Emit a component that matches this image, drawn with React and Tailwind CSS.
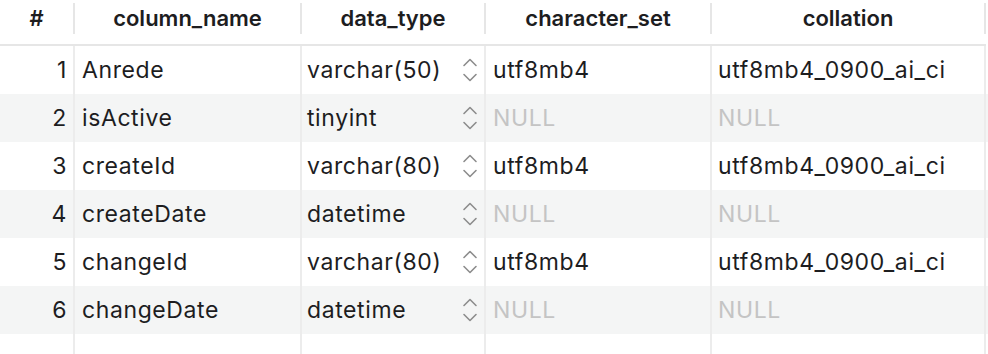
import React from "react";

const rows = [
  { n: 1, name: "Anrede", type: "varchar(50)", cs: "utf8mb4", col: "utf8mb4_0900_ai_ci" },
  { n: 2, name: "isActive", type: "tinyint", cs: null, col: null },
  { n: 3, name: "createId", type: "varchar(80)", cs: "utf8mb4", col: "utf8mb4_0900_ai_ci" },
  { n: 4, name: "createDate", type: "datetime", cs: null, col: null },
  { n: 5, name: "changeId", type: "varchar(80)", cs: "utf8mb4", col: "utf8mb4_0900_ai_ci" },
  { n: 6, name: "changeDate", type: "datetime", cs: null, col: null },
];

const grid = "grid grid-cols-[73px_227px_184px_226px_276px]";

function Chevrons() {
  return (
    <svg width="16" height="26" viewBox="0 0 16 26" fill="none" stroke="#8d8d8d" strokeWidth="1.6" strokeLinecap="round" strokeLinejoin="round">
      <path d="M2 8.5 L8 2.5 L14 8.5" />
      <path d="M2 17.5 L8 23.5 L14 17.5" />
    </svg>
  );
}

function Val({ v }) {
  if (v === null) return <span className="text-[#c4c4c4]">NULL</span>;
  return <span>{v}</span>;
}

export default function App() {
  return (
    <div className="w-[988px] h-[354px] bg-white overflow-hidden text-[23px] tracking-[0.6px] text-[#1d1d1f] font-['Inter','Liberation_Sans',sans-serif]">
      <div className={`${grid} h-[44px] pt-[3px] text-[22px] font-semibold tracking-normal`}>
        <div className="h-[31px] flex items-center justify-center">#</div>
        <div className="h-[31px] flex items-center justify-center border-l-2 border-[#e6e6e6]">column_name</div>
        <div className="h-[31px] flex items-center justify-center border-l-2 border-[#e6e6e6]">data_type</div>
        <div className="h-[31px] flex items-center justify-center border-l-2 border-[#e6e6e6]">character_set</div>
        <div className="h-[31px] flex items-center justify-center border-x-2 border-[#e6e6e6]">collation</div>
      </div>
      <div className="w-[986px] h-[2px] bg-[#e6e6e6]" />
      {rows.map((r) => (
        <div key={r.n} className={`${grid} h-[48px] ${r.n % 2 === 0 ? "bg-[#f4f5f5]" : "bg-white"}`}>
          <div className="flex items-center justify-end pr-[6px]">{r.n}</div>
          <div className="flex items-center pl-[7px] border-l-2 border-[#ececec]">{r.name}</div>
          <div className="flex items-center justify-between pl-[5px] pr-[6px] border-l-2 border-[#ececec]">
            <span>{r.type}</span>
            <Chevrons />
          </div>
          <div className="flex items-center pl-[7px] border-l-2 border-[#ececec]">
            <Val v={r.cs} />
          </div>
          <div className="flex items-center pl-[6px] border-x-2 border-[#ececec]">
            <Val v={r.col} />
          </div>
        </div>
      ))}
      <div className={`${grid} h-[20px]`}>
        <div />
        <div className="border-l-2 border-[#ececec]" />
        <div className="border-l-2 border-[#ececec]" />
        <div className="border-l-2 border-[#ececec]" />
        <div className="border-x-2 border-[#ececec]" />
      </div>
    </div>
  );
}
